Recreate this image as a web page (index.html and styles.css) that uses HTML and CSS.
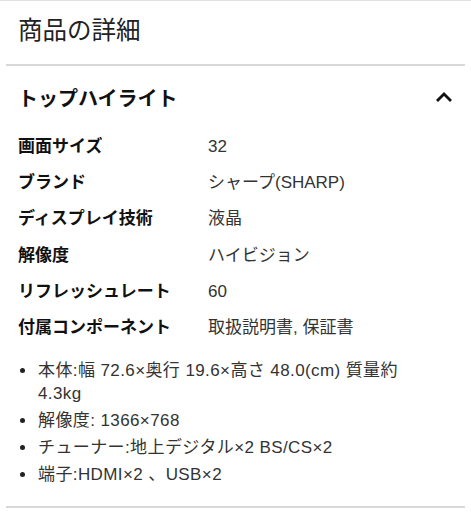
FILE: index.html
```html
<!DOCTYPE html>
<html lang="ja">
<head>
<meta charset="utf-8">
<link rel="stylesheet" href="styles.css">
</head>
<body>
<div class="page">
  <h1 class="title">商品の詳細</h1>
  <div class="rule"></div>
  <section class="highlights">
    <div class="hl-head">
      <h2 class="hl-title">トップハイライト</h2>
      <svg class="chevron" width="18" height="12" viewBox="0 0 18 12" aria-hidden="true">
        <path d="M2 10 L9 3 L16 10" fill="none" stroke="#111" stroke-width="2.8" stroke-linecap="butt" stroke-linejoin="miter"/>
      </svg>
    </div>
    <dl class="specs">
      <dt>画面サイズ</dt><dd>32</dd>
      <dt>ブランド</dt><dd>シャープ(SHARP)</dd>
      <dt>ディスプレイ技術</dt><dd>液晶</dd>
      <dt>解像度</dt><dd>ハイビジョン</dd>
      <dt>リフレッシュレート</dt><dd>60</dd>
      <dt>付属コンポーネント</dt><dd>取扱説明書, 保証書</dd>
    </dl>
    <ul class="bullets">
      <li><span>本体:幅 72.6×奥行 19.6×高さ 48.0(cm) 質量約 4.3kg</span></li>
      <li><span>解像度: 1366×768</span></li>
      <li><span>チューナー:地上デジタル×2 BS/CS×2</span></li>
      <li><span>端子:HDMI×2 、USB×2</span></li>
    </ul>
  </section>
  <div class="rule"></div>
</div>
</body>
</html>
```
FILE: styles.css
```css
* { box-sizing: border-box; }
html, body {
  margin: 0;
  padding: 0;
  background: #fff;
}
body {
  font-family: "Liberation Sans", "Noto Sans CJK JP", sans-serif;
  color: #333;
  border-top: 1px solid #e2e2e2;
}
.page {
  display: flex;
  flex-direction: column;
}
.title {
  margin: 15px 0 0;
  padding: 0 18px 18px;
  font-size: 24.5px;
  line-height: 30px;
  font-weight: 400;
  color: #222;
}
.rule {
  height: 2px;
  margin: 0 6px;
  background: #d8d8d8;
}
.highlights {
  padding: 19px 18px 0;
}
.hl-head {
  display: flex;
  align-items: center;
  justify-content: space-between;
}
.hl-title {
  margin: 0;
  font-size: 20px;
  line-height: 28px;
  font-weight: 700;
  color: #111;
}
.chevron {
  margin-top: -5px;
}
.specs {
  display: grid;
  grid-template-columns: 190px 1fr;
  margin: 16px 0 0;
  font-size: 17px;
  line-height: 36.2px;
}
.specs dt {
  font-weight: 700;
  color: #111;
}
.specs dd {
  margin: 0;
  color: #333;
}
.bullets {
  list-style: none;
  margin: 13px 0 20px;
  padding: 0 40px 0 0;
  font-size: 17px;
  line-height: 23px;
  letter-spacing: 0.4px;
  color: #333;
}
.bullets li {
  display: grid;
  grid-template-columns: 20px 1fr;
  margin-top: 4px;
}
.bullets li:first-child {
  margin-top: 0;
}
.bullets li::before {
  content: "";
  width: 5px;
  height: 5px;
  border-radius: 50%;
  background: #222;
  margin: 9px 0 0 2px;
}
```
